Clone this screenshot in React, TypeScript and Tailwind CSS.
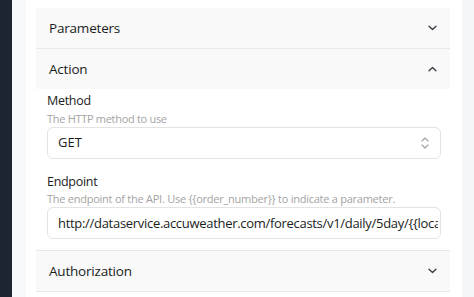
import React from "react";

const Down = () => (
  <svg width="9" height="6" viewBox="0 0 9 6" fill="none" stroke="#333a44" strokeWidth="1.3" strokeLinecap="round" strokeLinejoin="round">
    <path d="M1 1.3 L4.5 4.5 L8 1.3" />
  </svg>
);
const Up = () => (
  <svg width="9" height="6" viewBox="0 0 9 6" fill="none" stroke="#333a44" strokeWidth="1.3" strokeLinecap="round" strokeLinejoin="round">
    <path d="M1 4.7 L4.5 1.5 L8 4.7" />
  </svg>
);
const UpDown = () => (
  <svg width="10" height="14" viewBox="0 0 10 14" fill="none" stroke="#a3a3a3" strokeWidth="1.2" strokeLinecap="round" strokeLinejoin="round">
    <path d="M2 5 L5 2 L8 5" />
    <path d="M2 9 L5 12 L8 9" />
  </svg>
);

export default function App() {
  return (
    <div className="flex h-[297px] w-[474px] overflow-hidden bg-white" style={{ fontFamily: '"Open Sans", "Noto Sans", sans-serif' }}>
      <div className="w-[12px] shrink-0 bg-[#1e2532]" />
      <div className="w-[14px] shrink-0 bg-[#f8f9fa]" />
      <div className="w-[436px] shrink-0 bg-white pl-[10px] pr-[12px] pt-[8px]">
        <div className="w-[414px]">
          <div className="flex h-[40px] items-center justify-between bg-[#f9f9f9] pl-[13px] pr-[13px] text-[13.5px] tracking-[-0.2px] text-[#1a1d21]">
            <span>Parameters</span>
            <Down />
          </div>
          <div className="h-px bg-[#e8e8e8]" />
          <div className="flex h-[40px] items-center justify-between bg-[#f9f9f9] pl-[13px] pr-[13px] text-[13.5px] tracking-[-0.2px] text-[#1a1d21]">
            <span>Action</span>
            <Up />
          </div>
          <div className="flex h-[161px] flex-col pl-[11px] pr-[9px] pt-[3px]">
            <div className="h-[18px] text-[12.5px] leading-[18px] tracking-[-0.3px] text-[#1a1d21]">Method</div>
            <div className="h-[17px] text-[11px] leading-[17px] tracking-[-0.3px] text-[#a3a3a3]">The HTTP method to use</div>
            <div className="flex h-[32px] items-center justify-between rounded-[6px] border border-[#e3e3e3] pl-[10px] pr-[10px] text-[13px] text-[#1a1d21]">
              <span>GET</span>
              <UpDown />
            </div>
            <div className="mt-[14px] h-[18px] text-[12.5px] leading-[18px] tracking-[-0.3px] text-[#1a1d21]">Endpoint</div>
            <div className="h-[16px] whitespace-nowrap text-[11px] leading-[16px] tracking-[-0.25px] text-[#a3a3a3]">
              The endpoint of the API. Use {"{{order_number}}"} to indicate a parameter.
            </div>
            <input
              readOnly
              value={"http://dataservice.accuweather.com/forecasts/v1/daily/5day/{{locationKey}}"}
              className="h-[32px] w-full rounded-[6px] border border-[#e3e3e3] bg-white pl-[10px] pr-[2px] text-[13px] tracking-[-0.3px] text-[#1a1d21] outline-none"
              style={{ fontFamily: '"Open Sans", "Noto Sans", sans-serif' }}
            />
          </div>
          <div className="h-px bg-[#e8e8e8]" />
          <div className="flex h-[40px] items-center justify-between bg-[#f9f9f9] pl-[13px] pr-[13px] text-[13.5px] tracking-[-0.2px] text-[#1a1d21]">
            <span>Authorization</span>
            <Down />
          </div>
          <div className="h-px bg-[#e8e8e8]" />
        </div>
      </div>
      <div className="w-[12px] shrink-0 bg-[#f5f6f7]" />
    </div>
  );
}
